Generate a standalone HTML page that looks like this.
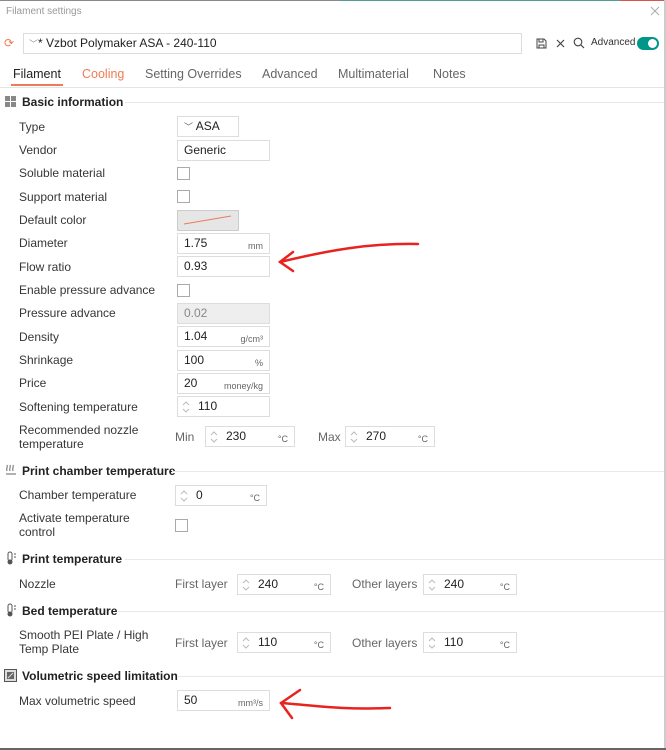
<!DOCTYPE html><html><head><meta charset="utf-8"><style>
*{box-sizing:border-box;margin:0;padding:0}
body{width:666px;height:750px;background:#fff;font-family:"Liberation Sans",sans-serif;font-size:12px;color:#333;position:relative;overflow:hidden}
.a{position:absolute;white-space:nowrap}
.l{position:absolute;left:19px;color:#363636;font-size:12px;line-height:14px}
.in{position:absolute;border:1px solid #ddd;background:#fff;height:21px;font-size:12px;line-height:19px;padding-left:6px;color:#222}
.u{position:absolute;right:6px;top:1px;font-size:9px;color:#666}
.cb{position:absolute;left:177px;width:13px;height:13px;border:1px solid #aaa;background:#fff}
.sp{position:absolute;left:3px;top:3px}
.h{position:absolute;left:22px;font-weight:bold;font-size:12px;color:#222;line-height:14px}
.hl{position:absolute;height:1px;background:#e8e8e8;right:2px}
.g{color:#666}
</style></head><body>
<svg width="0" height="0" style="position:absolute"><defs><symbol id="s" viewBox="0 0 10 14"><path d="M2 5 L5 2 L8 5 M2 9 L5 12 L8 9" stroke="#bbb" fill="none" stroke-width="1"/></symbol></defs></svg>
<div class="a" style="left:0;top:0;width:340px;height:1px;background:#8a8a8a"></div>
<div class="a" style="left:340px;top:0;width:280px;height:1px;background:#4e9e98"></div>
<div class="a" style="left:620px;top:0;width:46px;height:1px;background:#d9534f"></div>
<div class="a" style="left:6px;top:6px;font-size:10px;color:#999">Filament settings</div>
<svg class="a" style="left:650px;top:6px" width="10" height="10"><path d="M1 1L9 9M9 1L1 9" stroke="#aaa" stroke-width="1"/></svg>
<div class="a" style="left:4px;top:36px;font-size:12px;color:#f07a55">⟳</div>
<div class="a" style="left:23px;top:33px;width:499px;height:21px;border:1px solid #ddd"></div>
<div class="a" style="left:29px;top:36px;font-size:12px;color:#222"><span style="color:#999;font-size:9px">﹀</span>* Vzbot Polymaker ASA - 240-110</div>
<svg class="a" style="left:536px;top:38px" width="11" height="11"><path d="M1 1H8L10 3V10H1Z M3 1V4H7V1 M3 10V7H8V10" stroke="#444" fill="none" stroke-width="1"/></svg>
<svg class="a" style="left:556px;top:39px" width="9" height="9"><path d="M1 1L8 8M8 1L1 8" stroke="#444" stroke-width="1.2"/></svg>
<svg class="a" style="left:573px;top:37px" width="12" height="12"><circle cx="5" cy="5" r="3.8" stroke="#444" fill="none" stroke-width="1.1"/><path d="M8 8L11 11" stroke="#444" stroke-width="1.2"/></svg>
<div class="a" style="left:591px;top:37px;font-size:10px;color:#333">Advanced</div>
<div class="a" style="left:637px;top:37px;width:22px;height:13px;border-radius:7px;background:#009688"><div style="position:absolute;right:2px;top:2px;width:9px;height:9px;border-radius:50%;background:#fff"></div></div>
<div class="a" style="left:13px;top:67px;font-size:12.5px;color:#222">Filament</div>
<div class="a" style="left:11px;top:84px;width:52px;height:2px;background:#f07a55"></div>
<div class="a" style="left:82px;top:67px;font-size:12.5px;color:#f07a55">Cooling</div>
<div class="a" style="left:145px;top:67px;font-size:12.5px;color:#666">Setting Overrides</div>
<div class="a" style="left:262px;top:67px;font-size:12.5px;color:#666">Advanced</div>
<div class="a" style="left:338px;top:67px;font-size:12.5px;color:#666">Multimaterial</div>
<div class="a" style="left:433px;top:67px;font-size:12.5px;color:#666">Notes</div>
<div class="a" style="left:0;top:87px;width:666px;height:1px;background:#e4e4e4"></div>

<div class="a" style="left:5px;top:96px;width:11px;height:11px;display:grid;grid-template-columns:5px 5px;gap:1px"><i style="background:#888"></i><i style="background:#888"></i><i style="background:#888"></i><i style="background:#888"></i></div>
<div class="h" style="top:95px">Basic information</div><div class="hl" style="left:125px;top:102px"></div>
<div class="l" style="top:120px">Type</div><div class="in" style="left:177px;top:116px;width:62px"><span class="g" style="font-size:9px">﹀</span> ASA</div>
<div class="l" style="top:143px">Vendor</div><div class="in" style="left:177px;top:140px;width:93px">Generic</div>
<div class="l" style="top:166px">Soluble material</div><div class="cb" style="top:167px"></div>
<div class="l" style="top:190px">Support material</div><div class="cb" style="top:190px"></div>
<div class="l" style="top:213px">Default color</div><div class="in" style="left:177px;top:210px;width:62px;background:#e6e6e6;border-color:#ccc"><svg width="58" height="18" style="position:absolute;left:0;top:0"><line x1="6" y1="13" x2="53" y2="5" stroke="#f07a55" stroke-width="1"/></svg></div>
<div class="l" style="top:236px">Diameter</div><div class="in" style="left:177px;top:233px;width:93px">1.75<span class="u" style="top:3px">mm</span></div>
<div class="l" style="top:260px">Flow ratio</div><div class="in" style="left:177px;top:256px;width:93px">0.93</div>
<div class="l" style="top:283px">Enable pressure advance</div><div class="cb" style="top:284px"></div>
<div class="l" style="top:306px">Pressure advance</div><div class="in" style="left:177px;top:303px;width:93px;background:#eee;color:#888">0.02</div>
<div class="l" style="top:330px">Density</div><div class="in" style="left:177px;top:326px;width:93px">1.04<span class="u" style="top:3px">g/cm³</span></div>
<div class="l" style="top:353px">Shrinkage</div><div class="in" style="left:177px;top:350px;width:93px">100<span class="u" style="top:3px">%</span></div>
<div class="l" style="top:376px">Price</div><div class="in" style="left:177px;top:373px;width:93px">20<span class="u" style="top:3px">money/kg</span></div>
<div class="l" style="top:400px">Softening temperature</div><div class="in" style="left:177px;top:396px;width:93px;padding-left:20px"><svg class="sp" width="10" height="14"><use href="#s"/></svg>110</div>
<div class="l" style="top:423px">Recommended nozzle<br>temperature</div>
<div class="a g" style="left:175px;top:430px">Min</div><div class="in" style="left:205px;top:426px;width:90px;padding-left:20px"><svg class="sp" width="10" height="14"><use href="#s"/></svg>230<span class="u" style="top:3px">°C</span></div>
<div class="a g" style="left:318px;top:430px">Max</div><div class="in" style="left:345px;top:426px;width:90px;padding-left:20px"><svg class="sp" width="10" height="14"><use href="#s"/></svg>270<span class="u" style="top:3px">°C</span></div>

<svg class="a" style="left:5px;top:464px" width="12" height="12"><path d="M2 1c1 2-1 3 0 6M5 1c1 2-1 3 0 6M8 1c1 2-1 3 0 6M1 10H11" stroke="#666" fill="none" stroke-width="1"/></svg>
<div class="h" style="top:464px">Print chamber temperature</div><div class="hl" style="left:172px;top:471px"></div>
<div class="l" style="top:488px">Chamber temperature</div><div class="in" style="left:175px;top:485px;width:92px;padding-left:20px"><svg class="sp" width="10" height="14"><use href="#s"/></svg>0<span class="u" style="top:3px">°C</span></div>
<div class="l" style="top:511px">Activate temperature<br>control</div><div class="cb" style="left:175px;top:519px"></div>

<svg class="a" style="left:6px;top:551px" width="12" height="14"><rect x="2" y="1" width="4" height="9" rx="2" stroke="#555" fill="none"/><circle cx="4" cy="11" r="2.5" fill="#555"/><path d="M8 3H10M8 6H10" stroke="#555"/></svg>
<div class="h" style="top:552px">Print temperature</div><div class="hl" style="left:125px;top:559px"></div>
<div class="l" style="top:577px">Nozzle</div>
<div class="a g" style="left:175px;top:577px">First layer</div><div class="in" style="left:237px;top:574px;width:94px;padding-left:20px"><svg class="sp" width="10" height="14"><use href="#s"/></svg>240<span class="u" style="top:3px">°C</span></div>
<div class="a g" style="left:352px;top:577px">Other layers</div><div class="in" style="left:423px;top:574px;width:94px;padding-left:20px"><svg class="sp" width="10" height="14"><use href="#s"/></svg>240<span class="u" style="top:3px">°C</span></div>

<svg class="a" style="left:6px;top:603px" width="12" height="14"><rect x="2" y="1" width="4" height="9" rx="2" stroke="#555" fill="none"/><circle cx="4" cy="11" r="2.5" fill="#555"/><path d="M8 3H10M8 6H10" stroke="#555"/></svg>
<div class="h" style="top:604px">Bed temperature</div><div class="hl" style="left:118px;top:611px"></div>
<div class="l" style="top:628px">Smooth PEI Plate / High<br>Temp Plate</div>
<div class="a g" style="left:175px;top:636px">First layer</div><div class="in" style="left:237px;top:632px;width:94px;padding-left:20px"><svg class="sp" width="10" height="14"><use href="#s"/></svg>110<span class="u" style="top:3px">°C</span></div>
<div class="a g" style="left:352px;top:636px">Other layers</div><div class="in" style="left:423px;top:632px;width:94px;padding-left:20px"><svg class="sp" width="10" height="14"><use href="#s"/></svg>110<span class="u" style="top:3px">°C</span></div>

<svg class="a" style="left:4px;top:669px" width="13" height="13"><rect x="0.5" y="0.5" width="12" height="12" fill="#ddd" stroke="#555"/><rect x="3" y="3" width="7" height="7" fill="#666"/><path d="M4 9L9 4" stroke="#ddd"/></svg>
<div class="h" style="top:669px">Volumetric speed limitation</div><div class="hl" style="left:178px;top:676px"></div>
<div class="l" style="top:694px">Max volumetric speed</div><div class="in" style="left:177px;top:690px;width:93px">50<span class="u" style="top:3px">mm³/s</span></div>

<svg class="a" style="left:0;top:0" width="666" height="750">
<path d="M280 262 C330 250 370 243 418 244" stroke="#e8231f" stroke-width="2.5" fill="none" stroke-linecap="round"/>
<path d="M293 252 L280 262 L293 271" stroke="#e8231f" stroke-width="2.5" fill="none" stroke-linecap="round"/>
<path d="M281 703 C310 705 340 710 390 708" stroke="#e8231f" stroke-width="2.5" fill="none" stroke-linecap="round"/>
<path d="M300 690 L281 703 L292 718" stroke="#e8231f" stroke-width="2.5" fill="none" stroke-linecap="round"/>
</svg>
<div class="a" style="left:664px;top:0;width:2px;height:750px;background:#ccc"></div>
<div class="a" style="left:0;top:748px;width:666px;height:2px;background:#666"></div>
</body></html>
